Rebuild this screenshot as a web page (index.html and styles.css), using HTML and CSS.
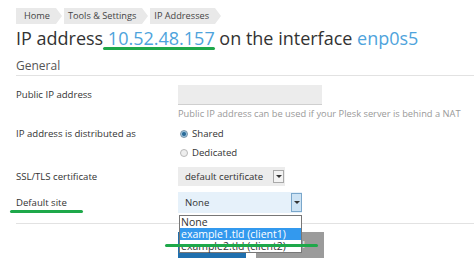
FILE: index.html
```html
<html>
    <head>
        <title>IP address 10.52.48.157</title>
        <link rel="stylesheet" href="styles.css">
    </head>
    <body>
        <div class="crumbs">
            <a href="#" class="crumb">Home</a>
            <a href="#" class="crumb">Tools &amp; Settings</a>
            <a href="#" class="crumb">IP Addresses</a>
        </div>
        <h1>IP address <span class="hl mark">10.52.48.157</span> on the interface <span class="hl">enp0s5</span></h1>
        <div class="section">General</div>
        <div class="form">
            <div class="row public">
                <label>Public IP address</label>
                <div class="field">
                    <div class="input"></div>
                    <div class="hint">Public IP address can be used if your Plesk server is behind a NAT</div>
                </div>
            </div>
            <div class="row dist">
                <label>IP address is distributed as</label>
                <div class="field">
                    <div class="radio"><span class="dot on"></span>Shared</div>
                    <div class="radio"><span class="dot"></span>Dedicated</div>
                </div>
            </div>
            <div class="row ssl">
                <label>SSL/TLS certificate</label>
                <div class="field">
                    <div class="select cert"><span>default certificate</span><b></b></div>
                </div>
            </div>
            <div class="row site-row">
                <label class="mark">Default site</label>
                <div class="field">
                    <div class="select site"><span>None</span><b></b>
                        <ul class="options">
                            <li>None</li>
                            <li class="sel">example1.tld (client1)</li>
                            <li>example2.tld (client2)</li>
                        </ul>
                        <div class="stroke"></div>
                    </div>
                </div>
            </div>
        </div>
        <div class="buttons">
            <div class="btn ok">OK</div>
            <div class="btn cancel">Cancel</div>
        </div>
    </body>
</html>
```
FILE: styles.css
```css
body {
    font-family: "Open Sans", "DejaVu Sans", sans-serif;
    color: #333;
    margin: 0;
    padding: 8px 0 0 16px;
    height: 269px;
    box-sizing: border-box;
    overflow: hidden;
}
.crumbs {
    display: flex;
    height: 16px;
}
.crumb {
    position: relative;
    background: #e9e9e9;
    color: #444;
    font-size: 9.2px;
    line-height: 16px;
    padding: 0 6px 0 4px;
    margin-right: 8px;
    text-decoration: none;
    white-space: nowrap;
}
.crumb:first-child {
    padding-left: 8px;
}
.crumb:after {
    content: "";
    position: absolute;
    right: -6px;
    top: 0;
    border-left: 6px solid #e9e9e9;
    border-top: 8px solid transparent;
    border-bottom: 8px solid transparent;
}
h1 {
    font-weight: normal;
    font-size: 18px;
    line-height: 24px;
    margin: 2px 0 0;
    color: #333;
    white-space: nowrap;
}
.hl {
    color: #4ea3dc;
}
.mark {
    position: relative;
}
h1 .mark:after {
    content: "";
    position: absolute;
    left: -5px;
    right: 0;
    bottom: 0;
    height: 3px;
    border-radius: 2px;
    background: #1ea84a;
}
.section {
    font-size: 12px;
    line-height: 16px;
    color: #555;
    margin-top: 8px;
    padding-bottom: 1px;
    border-bottom: 1px solid #e2e2e2;
}
.form {
    padding-top: 9px;
}
.row {
    display: flex;
    font-size: 9.6px;
}
.row label {
    width: 162px;
    flex: none;
    line-height: 19px;
}
.public label {
    line-height: 20px;
}
.dist {
    margin-top: 3px;
}
.ssl {
    margin-top: 5px;
}
.site-row {
    margin-top: 6px;
}
.site-row label {
    line-height: 21px;
}
.row label.mark:after {
    content: "";
    position: absolute;
    left: -6px;
    width: 73px;
    bottom: 0;
    height: 3px;
    border-radius: 2px;
    background: #1ea84a;
}
.input {
    width: 144px;
    height: 19px;
    background: #ececec;
    border-bottom: 1px solid #cfcfcf;
}
.hint {
    font-size: 9.3px;
    line-height: 14px;
    color: #999;
    margin-top: 2px;
    white-space: nowrap;
}
.radio {
    display: flex;
    align-items: center;
    height: 19px;
}
.dot {
    width: 8px;
    height: 8px;
    border-radius: 50%;
    border: 1px solid #b9b9b9;
    background: #eee;
    margin: 0 4px 0 2px;
    box-sizing: border-box;
}
.dot.on {
    border-color: #7a95a8;
    background: radial-gradient(circle, #2a6b98 0 1.5px, #9cc4e0 2.5px);
}
.select {
    position: relative;
    display: flex;
    align-items: center;
    height: 19px;
    background: #ececec;
    padding-left: 7px;
    box-sizing: border-box;
    white-space: nowrap;
}
.select span {
    flex: 1;
}
.select b {
    width: 11px;
    height: 13px;
    margin-right: 1px;
    border: 1px solid #a9a9a9;
    background: #f3f3f3;
    box-sizing: border-box;
    position: relative;
}
.select b:after {
    content: "";
    position: absolute;
    left: 2px;
    top: 4px;
    border-top: 3px solid #333;
    border-left: 3px solid transparent;
    border-right: 3px solid transparent;
}
.cert {
    width: 107px;
}
.site {
    width: 124px;
    height: 21px;
    background: #e6f1fa;
}
.site b {
    height: 19px;
    border-color: #7aa7cb;
    background: #cde3f4;
    margin-right: 0;
}
.site b:after {
    top: 7px;
}
.options {
    position: absolute;
    left: 1px;
    top: 23px;
    width: 123px;
    margin: 0;
    padding: 0;
    list-style: none;
    background: #fff;
    border: 1px solid #777;
    box-sizing: border-box;
    z-index: 2;
    font-size: 10.5px;
}
.options li {
    line-height: 12px;
    padding: 0 1px;
}
.options li.sel {
    background: #3399ee;
    color: #fff;
}
.stroke {
    position: absolute;
    left: -13px;
    width: 153px;
    top: 52px;
    height: 3px;
    border-radius: 2px;
    background: #1ea84a;
    z-index: 3;
}
.buttons {
    display: flex;
    border-top: 1px solid #e2e2e2;
    margin-top: 10px;
    padding: 8px 0 0 162px;
    gap: 10px;
}
.btn {
    height: 26px;
    color: #fff;
    font-size: 9.6px;
    line-height: 26px;
    text-align: center;
}
.ok {
    width: 68px;
    background: #1f6fae;
}
.cancel {
    width: 68px;
    background: #9b9b9b;
}
```
